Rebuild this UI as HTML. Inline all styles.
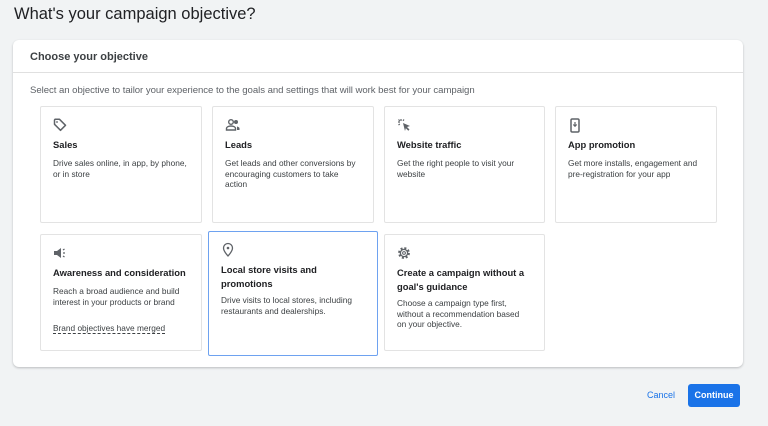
<!DOCTYPE html>
<html><head><style>
body{margin:0;width:768px;height:426px;background:#f1f3f4;font-family:"Liberation Sans",Arial,sans-serif;position:relative;overflow:hidden;color:#202124}
h1{position:absolute;left:14px;top:5px;margin:0;font-size:16.5px;font-weight:normal;color:#202124}
.panel{position:absolute;left:13px;top:40px;width:730px;height:327px;background:#fff;border-radius:6px;box-shadow:0 1px 2px rgba(60,64,67,.3)}
.hd{position:absolute;left:17px;top:11px;font-size:11px;font-weight:bold;color:#3c4043}
.div{position:absolute;left:0;right:0;top:32px;border-top:1px solid #e0e0e0}
.sub{position:absolute;left:17px;top:45px;font-size:9.6px;color:#5f6368;letter-spacing:-0.05px}
.card{position:absolute;border:1px solid #e3e3e3;border-radius:2px;background:#fff;box-sizing:border-box}
.card.sel{border:1px solid #6ea2f0}
.card svg{position:absolute;left:12px;top:11px}
.t{position:absolute;left:12px;font-size:9.4px;font-weight:bold;color:#202124;line-height:13.5px;width:140px}
.d{position:absolute;left:12px;font-size:8.3px;color:#3c4043;line-height:10.5px;width:136px}
.btn{position:absolute;left:688px;top:384px;width:52px;height:23px;background:#1a73e8;border-radius:3px;color:#fff;font-size:9px;text-align:center;line-height:23px;font-weight:bold}
.cancel{position:absolute;left:647px;top:390px;font-size:9px;color:#1a73e8}
</style></head><body>
<h1>What's your campaign objective?</h1>
<div class="panel">
<div class="hd">Choose your objective</div>
<div class="div"></div>
<div class="sub">Select an objective to tailor your experience to the goals and settings that will work best for your campaign</div>
</div>

<div class="card" style="left:40px;top:106px;width:162px;height:117px">
<svg width="14" height="14" viewBox="0 0 14 14"><path d="M1.5 2v4.3l6 6 5-5-6-6H2z" fill="none" stroke="#5f6368" stroke-width="1.5" stroke-linejoin="round"/><circle cx="4" cy="4" r="0.9" fill="#5f6368"/></svg>
<div class="t" style="top:31px">Sales</div>
<div class="d" style="top:51px">Drive sales online, in app, by phone, or in store</div>
</div>
<div class="card" style="left:212px;top:106px;width:162px;height:117px">
<svg width="16" height="14" viewBox="0 0 16 14"><circle cx="6" cy="4" r="2.3" fill="none" stroke="#5f6368" stroke-width="1.4"/><path d="M1.5 12v-1.5c0-1.5 2-2.5 4.5-2.5s4.5 1 4.5 2.5V12z" fill="none" stroke="#5f6368" stroke-width="1.4"/><circle cx="11" cy="4" r="2" fill="#5f6368"/><path d="M12 8.5c1.5.3 2.5 1 2.5 2V12h-2.5z" fill="#5f6368"/></svg>
<div class="t" style="top:31px">Leads</div>
<div class="d" style="top:51px">Get leads and other conversions by encouraging customers to take action</div>
</div>
<div class="card" style="left:384px;top:106px;width:161px;height:117px">
<svg width="14" height="14" viewBox="0 0 14 14"><path d="M6 5l7 3-3 1 2.5 2.5-1.2 1.2L8.8 10.2 8 13z" fill="#5f6368"/><path d="M4 1v2M1 4h2M1.5 1.5l1.3 1.3M7 1.5L6 2.8M1.5 7L2.8 6" stroke="#5f6368" stroke-width="1.2"/></svg>
<div class="t" style="top:31px">Website traffic</div>
<div class="d" style="top:51px">Get the right people to visit your website</div>
</div>
<div class="card" style="left:555px;top:106px;width:162px;height:117px">
<svg width="14" height="15" viewBox="0 0 14 15"><rect x="3" y="1" width="8" height="13" rx="1.3" fill="none" stroke="#5f6368" stroke-width="1.5"/><path d="M7 4v4M5.3 6.5L7 8.3 8.7 6.5" stroke="#5f6368" stroke-width="1.2" fill="none"/></svg>
<div class="t" style="top:31px">App promotion</div>
<div class="d" style="top:51px">Get more installs, engagement and pre-registration for your app</div>
</div>

<div class="card" style="left:40px;top:234px;width:162px;height:117px">
<svg width="14" height="14" viewBox="0 0 14 14"><path d="M1 5h3l4-3v10L4 9H1z" fill="#5f6368"/><path d="M10 4l1.5-1M10 7h2M10 10l1.5 1" stroke="#5f6368" stroke-width="1.2"/></svg>
<div class="t" style="top:31px">Awareness and consideration</div>
<div class="d" style="top:51px">Reach a broad audience and build interest in your products or brand</div>
<div class="d" style="top:88px"><span style="border-bottom:1px dashed #3c4043">Brand objectives have merged</span></div>
</div>
<div class="card sel" style="left:208px;top:231px;width:170px;height:125px">
<svg width="14" height="15" viewBox="0 0 14 15" style="top:10px"><path d="M7 14s-4.5-5-4.5-8a4.5 4.5 0 0 1 9 0c0 3-4.5 8-4.5 8z" fill="none" stroke="#5f6368" stroke-width="1.3"/><circle cx="7" cy="6" r="1.3" fill="#5f6368"/></svg>
<div class="t" style="top:31px">Local store visits and promotions</div>
<div class="d" style="top:63px;width:145px">Drive visits to local stores, including restaurants and dealerships.</div>
</div>
<div class="card" style="left:384px;top:234px;width:161px;height:117px">
<svg width="14" height="14" viewBox="0 0 14 14"><circle cx="7" cy="7" r="4.8" fill="none" stroke="#5f6368" stroke-width="2.2" stroke-dasharray="2 1.8"/><circle cx="7" cy="7" r="3.6" fill="none" stroke="#5f6368" stroke-width="1.3"/><circle cx="7" cy="7" r="1.4" fill="none" stroke="#5f6368" stroke-width="1"/></svg>
<div class="t" style="top:31px">Create a campaign without a goal's guidance</div>
<div class="d" style="top:63px;width:132px">Choose a campaign type first, without a recommendation based on your objective.</div>
</div>

<div class="cancel">Cancel</div>
<div class="btn">Continue</div>
</body></html>
